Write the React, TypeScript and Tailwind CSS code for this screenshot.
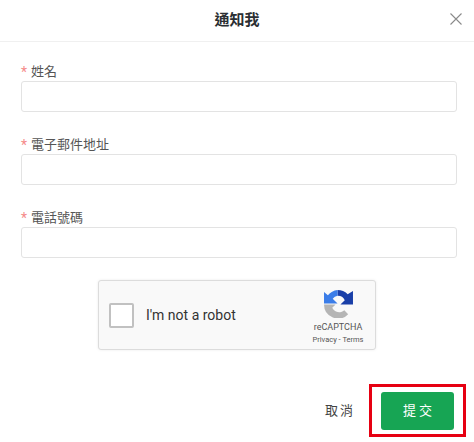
const cjk = "font-['Roboto','Noto_Sans_CJK_TC','Noto_Sans_CJK_SC',sans-serif]";

function Field({ label, className }: { label: string; className?: string }) {
  return (
    <div className={className}>
      <div className="flex h-[16px] items-center text-[13px] leading-[16px] text-[#555]">
        <span className="mr-[4px] w-[6px] text-[14px] text-[#f58a8a]">*</span>
        <span>{label}</span>
      </div>
      <div className="mt-[1px] h-[31px] rounded-[3px] border border-[#e3e3e3] bg-white" />
    </div>
  );
}

function RecaptchaLogo() {
  return (
    <svg width="29" height="28" viewBox="0 0 30 29" className="block">
      <path d="M0 15h12l-3.5 3.5A8 8 0 0 0 21 21l4 4A14.5 14.5 0 0 1 0 15Z" fill="#b5b5b5" />
      <path d="M14 0a15 15 0 0 1 10.500 4.300L30 1v14H17l4.500-4.500A8 8 0 0 0 14 6Z" fill="#1a3fa8" />
      <path d="M14 0v6a8 8 0 0 0-5 3l5 5H0V2l4 3.500A15 15 0 0 1 14 0Z" fill="#3b7de8" />
    </svg>
  );
}

export default function App() {
  return (
    <div className={`flex h-[442px] w-[474px] flex-col overflow-hidden bg-white ${cjk}`}>
      <header className="flex h-[42px] shrink-0 items-center border-b border-[#f0f0f0] pr-[12px]">
        <div className="w-[24px]" />
        <h1 className="flex-1 text-center text-[15px] font-bold text-[#2b2f33]">通知我</h1>
        <svg width="12" height="12" viewBox="0 0 12 12" className="mb-[3px]" fill="none" stroke="#8a8a8a" strokeWidth="1.1">
          <path d="M.5.5l11 11M11.5.5l-11 11" />
        </svg>
      </header>

      <div className="flex flex-col pl-[21px] pr-[17px] pt-[22px]">
        <Field label="姓名" />
        <Field label="電子郵件地址" className="mt-[25px]" />
        <Field label="電話號碼" className="mt-[25px]" />
      </div>

      <div className="ml-[98px] mt-[22px] flex h-[70px] w-[278px] shrink-0 items-center self-start rounded-[3px] border border-[#dcdcdc] bg-[#f9f9f9] pl-[10px] shadow-[0_0_3px_rgba(0,0,0,0.08)]">
        <div className="h-[25px] w-[25px] rounded-[2px] border-2 border-[#c1c1c1] bg-white" />
        <span className="ml-[12px] flex-1 font-['Roboto',sans-serif] text-[14px] text-[#333]">I'm not a robot</span>
        <div className="mr-[10px] flex w-[54px] flex-col items-center pt-[4px]">
          <RecaptchaLogo />
          <span className="mt-[4px] text-[9px] leading-[11px] text-[#555]">reCAPTCHA</span>
          <span className="mt-[2px] whitespace-nowrap text-[7.5px] leading-[9px] text-[#555]">Privacy - Terms</span>
        </div>
      </div>

      <footer className="mt-[34px] flex items-center justify-end pr-[8px]">
        <span className="mr-[14px] text-[13px] tracking-[2px] text-[#444]">取消</span>
        <div className="border-[3px] border-[#e60012] px-[9px] pb-[4px] pt-[5px]">
          <button className="flex h-[38px] w-[73px] items-center justify-center rounded-[3px] bg-[#17a554] pl-[3px] text-[13px] tracking-[3px] text-white">
            提交
          </button>
        </div>
      </footer>
    </div>
  );
}
